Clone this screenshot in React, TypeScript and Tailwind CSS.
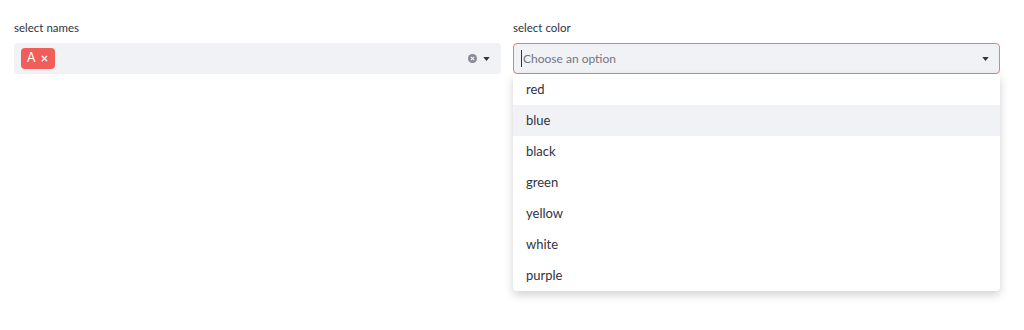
import { X } from 'lucide-react'

const colors = ['red', 'blue', 'black', 'green', 'yellow', 'white', 'purple']

function Caret() {
  return (
    <svg width="7" height="4" viewBox="0 0 8 5" className="fill-[#31333f]">
      <path d="M0 0h8L4 5z" />
    </svg>
  )
}

export default function App() {
  return (
    <div className="w-[1024px] h-[330px] bg-white text-[#31333f] font-['Source_Sans_Pro','Lato',sans-serif] flex gap-3 pl-[14px] pr-[24px] pt-[20px]">
      <div className="flex-1 flex flex-col">
        <label className="text-[11.5px] leading-[16px] h-[23px]">select names</label>
        <div className="h-[31px] rounded-[4px] bg-[#f0f2f6] flex items-center pl-[7px] pr-[11px]">
          <span className="h-[21px] px-[6px] rounded-[4px] bg-[#f15d58] text-white text-[12.5px] flex items-center gap-[5px]">
            A <X size={9} strokeWidth={3.2} />
          </span>
          <div className="flex-1" />
          <svg width="9" height="9" viewBox="0 0 10 10" className="mr-[6px]">
            <circle cx="5" cy="5" r="5" fill="#878891" />
            <path d="M3.2 3.2l3.6 3.6M6.8 3.2l-3.6 3.6" stroke="#f0f2f6" strokeWidth="1.4" />
          </svg>
          <Caret />
        </div>
      </div>
      <div className="flex-1 flex flex-col relative">
        <label className="text-[11.5px] leading-[16px] h-[23px]">select color</label>
        <div className="h-[31px] rounded-[4px] bg-[#f0f2f6] border border-[#ef7b78] flex items-center pl-[7px] pr-[10px]">
          <span className="w-px h-[17px] bg-[#31333f]" />
          <span className="text-[12px] text-[#737580] ml-px">Choose an option</span>
          <div className="flex-1" />
          <Caret />
        </div>
        <div className="absolute left-0 right-0 top-[54px] bg-white rounded-[4px] shadow-[0_4px_10px_rgba(0,0,0,0.18)]">
          {colors.map((c) => (
            <div
              key={c}
              className={`h-[31px] flex items-center pl-[13px] text-[13px] ${c === 'blue' ? 'bg-[#f0f2f6]' : ''}`}
            >
              {c}
            </div>
          ))}
        </div>
      </div>
    </div>
  )
}
